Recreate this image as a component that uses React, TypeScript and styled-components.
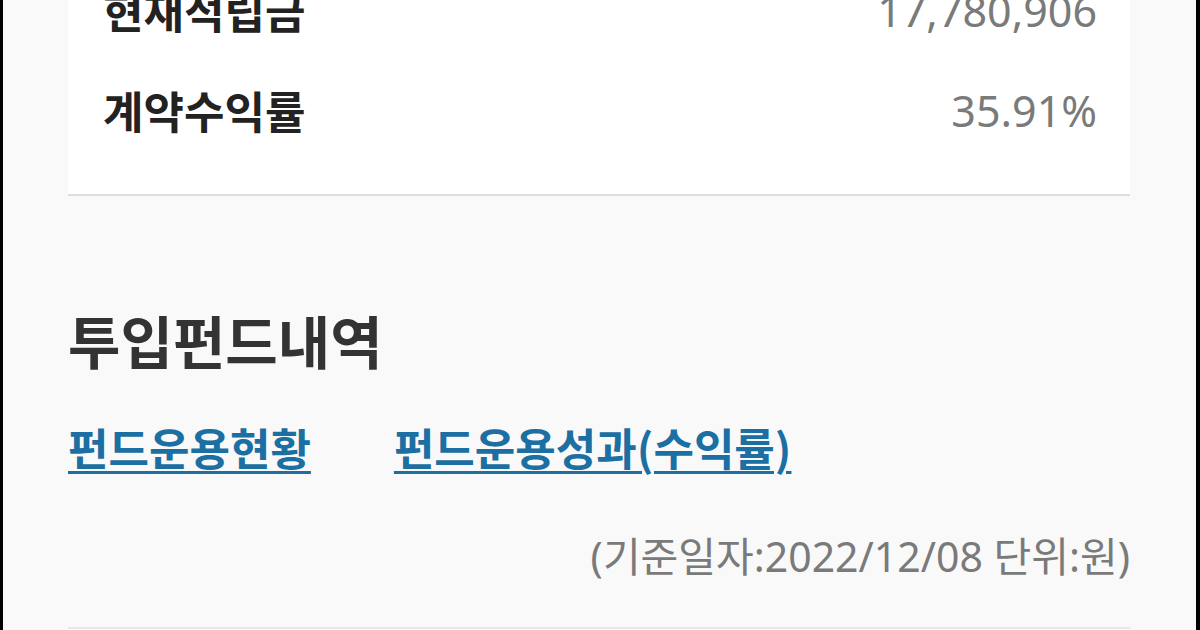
import React from 'react';
import styled, { createGlobalStyle } from 'styled-components';

const GlobalStyle = createGlobalStyle`
  html, body {
    margin: 0;
    padding: 0;
    background: #000;
    height: 630px;
    overflow: hidden;
  }
  body {
    font-family: "Noto Sans", "Noto Sans CJK KR", sans-serif;
  }
`;

const Frame = styled.div`
  height: 630px;
  margin: 0 4px 0 3px;
  background: #f9f9f9;
  overflow: hidden;
`;

// the screen is scrolled a little, so the first row sits partly above the top edge
const Content = styled.div`
  padding: 0 66px 0 65px;
  margin-top: -40px;
`;

const SummaryCard = styled.div`
  background: #fff;
  border-bottom: 2px solid #dedede;
  padding: 0 33px 34px 35px;
`;

const Row = styled.div`
  display: flex;
  justify-content: space-between;
  align-items: center;
  height: 100px;
`;

const Label = styled.span`
  font-family: "Noto Sans CJK KR", sans-serif;
  font-weight: 700;
  font-size: 44px;
  color: #222;
`;

const Value = styled.span`
  font-size: 43px;
  color: #7a7a7a;
`;

const SectionTitle = styled.h2`
  margin: 110px 0 0;
  font-family: "Noto Sans CJK KR", sans-serif;
  font-weight: 700;
  font-size: 57px;
  line-height: 66px;
  color: #333;
`;

const LinkRow = styled.div`
  display: flex;
  gap: 83px;
  margin-top: 49px;
`;

const FundLink = styled.a`
  font-family: "Noto Sans CJK KR", sans-serif;
  font-weight: 700;
  font-size: 44px;
  line-height: 52px;
  color: #1b6fa3;
  text-decoration: underline;
  text-decoration-thickness: 3px;
  text-underline-offset: 5px;
  cursor: pointer;
`;

const BaseNote = styled.div`
  margin-top: 58px;
  text-align: right;
  font-size: 41px;
  line-height: 50px;
  color: #7a7a7a;
`;

const NextBox = styled.div`
  margin-top: 46px;
  height: 40px;
  border-top: 2px solid #e6e6e6;
  background: #fff;
`;

const summary = [
  { label: '현재적립금', value: '17,780,906' },
  { label: '계약수익률', value: '35.91%' },
];

const App: React.FC = () => {
  return (
    <>
      <GlobalStyle />
      <Frame>
        <Content>
          <SummaryCard>
            {summary.map(item => (
              <Row key={item.label}>
                <Label>{item.label}</Label>
                <Value>{item.value}</Value>
              </Row>
            ))}
          </SummaryCard>

          <SectionTitle>투입펀드내역</SectionTitle>
          <LinkRow>
            <FundLink>펀드운용현황</FundLink>
            <FundLink>펀드운용성과(수익률)</FundLink>
          </LinkRow>

          <BaseNote>(기준일자:2022/12/08 단위:원)</BaseNote>
          <NextBox />
        </Content>
      </Frame>
    </>
  );
};

export default App;
